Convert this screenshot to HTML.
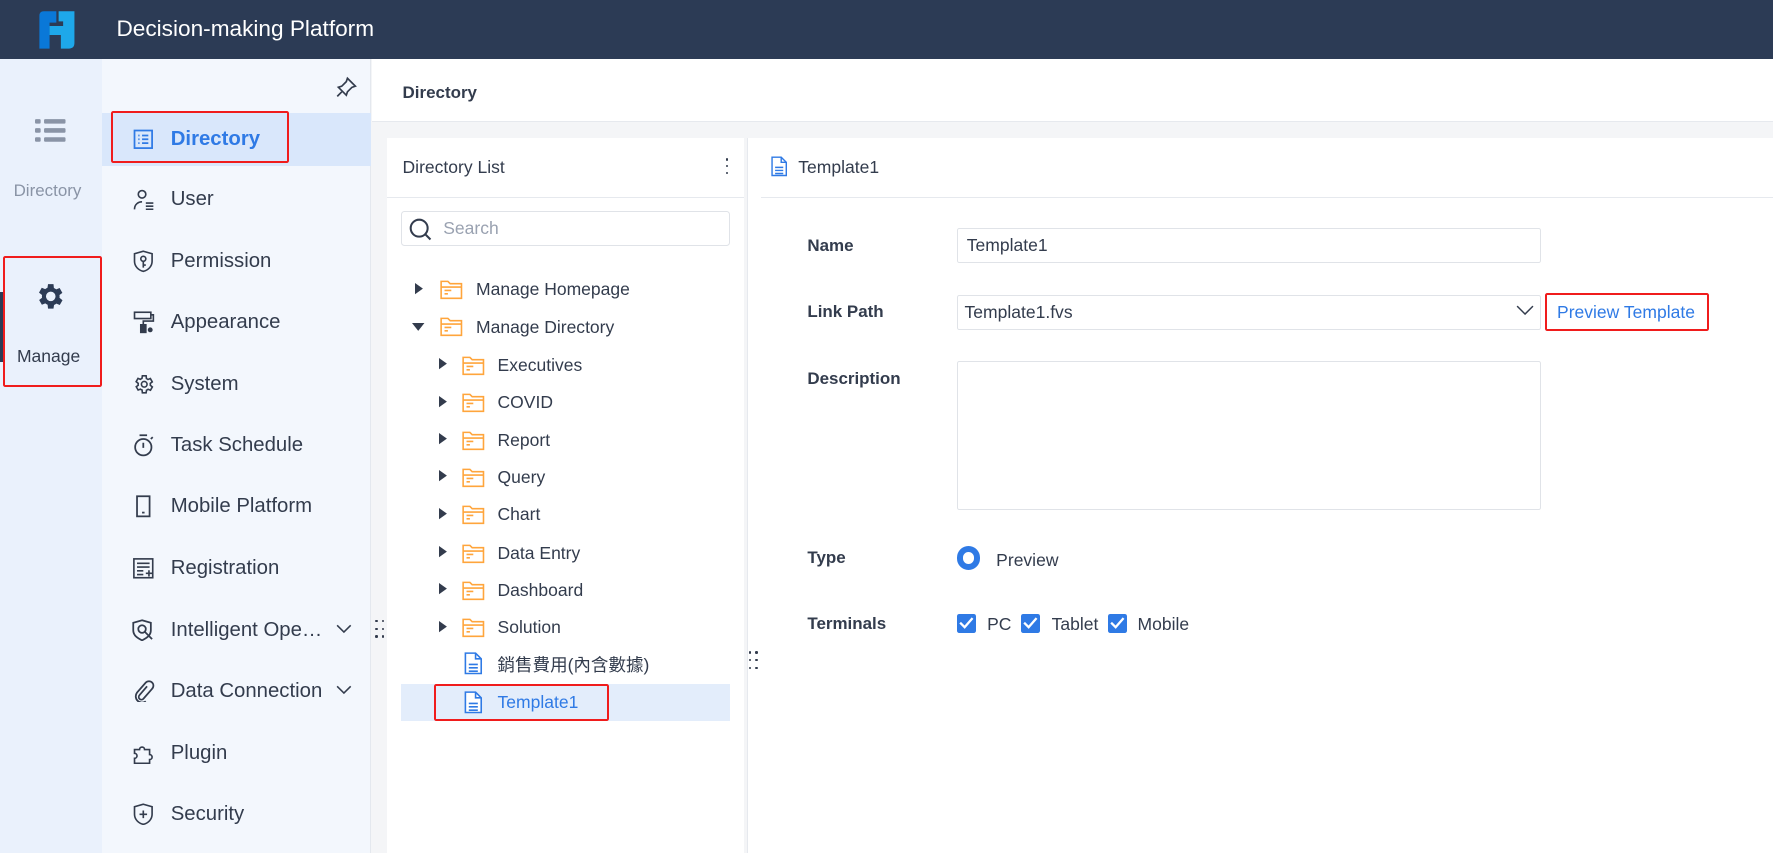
<!DOCTYPE html>
<html><head><meta charset="utf-8">
<style>
*{box-sizing:border-box;margin:0;padding:0}
html,body{width:1568px;height:754px;overflow:hidden}
body{zoom:1.13074;font-family:"Liberation Sans","Noto Sans CJK TC",sans-serif;color:#333c4d;background:#f4f5f7;position:relative}
.a{position:absolute}
.hdr{left:0;top:0;width:1568px;height:52px;background:#2c3b55}
.rail{left:0;top:52px;width:90px;height:702px;background:#eaf1fc}
.side{left:90px;top:52px;width:238px;height:702px;background:#f3f7fd;border-right:1px solid #e4e8ee}
.item{position:absolute;left:151px;font-size:18px;line-height:20px;color:#333c4d}
.ic{position:absolute;left:117px;width:20px;height:20px}
.red{position:absolute;border:2px solid #f01c1c;border-radius:2px}
.t{position:absolute;font-size:15.5px;line-height:18px;color:#333c4d}
.lbl{position:absolute;left:714px;font-size:15px;font-weight:bold;color:#333c4d}
.inp{position:absolute;left:846px;width:517px;border:1px solid #e0e3e8;background:#fff;border-radius:2px}
.cb{position:absolute;width:17px;height:17px;background:#2f7ae5;border-radius:2px}
.dots{position:absolute;width:8px;height:20px}
.dots i{position:absolute;width:2px;height:2px;background:#333c4d;border-radius:1px}
</style></head><body>
<div class="a hdr"></div>
<svg class="a" style="left:32px;top:8px" width="37" height="37" viewBox="0 0 37 37"><path d="M3 6 Q3 2 7 2 H18 V12 H12 V35 H3 Z" fill="#0a78d8"/><path d="M20 2 H34 V30 Q34 35 29 35 H22 V23 H12 V15 H24 V11 H20 Z" fill="#1ea8ea"/></svg>
<div class="a" style="left:103px;top:14px;font-size:20px;color:#fff">Decision-making Platform</div>

<div class="a rail"></div>
<div class="a" style="left:0;top:258px;width:3px;height:62px;background:#2c3b55"></div>
<svg class="a" style="left:31px;top:104px" width="27" height="23" viewBox="0 0 27 23"><g fill="#8a94a6"><rect x="0" y="1" width="5" height="4" rx="1"/><rect x="8" y="1" width="19" height="4" rx="1"/><rect x="0" y="9" width="5" height="4" rx="1"/><rect x="8" y="9" width="19" height="4" rx="1"/><rect x="0" y="17" width="5" height="4" rx="1"/><rect x="8" y="17" width="19" height="4" rx="1"/></g></svg>
<div class="a" style="left:12px;top:160px;font-size:15px;color:#8a94a6">Directory</div>
<svg class="a" style="left:29px;top:248px" width="29" height="29" viewBox="0 0 24 24"><path fill="#2c3b55" d="M19.4 13a7.5 7.5 0 0 0 0-2l2.1-1.6-2-3.5-2.5 1a7 7 0 0 0-1.7-1L15 3h-4l-.4 2.7a7 7 0 0 0-1.7 1l-2.5-1-2 3.5L6.6 11a7.5 7.5 0 0 0 0 2l-2.1 1.6 2 3.5 2.5-1a7 7 0 0 0 1.7 1L11 21h4l.4-2.7a7 7 0 0 0 1.7-1l2.5 1 2-3.5zM13 15.5a3.5 3.5 0 1 1 0-7 3.5 3.5 0 0 1 0 7z"/></svg>
<div class="a" style="left:15px;top:306px;font-size:15.5px;color:#333c4d">Manage</div>
<div class="red" style="left:3px;top:226px;width:87px;height:116px"></div>

<div class="a side"></div>
<svg class="a" style="left:296px;top:67px" width="20" height="20" viewBox="0 0 20 20" fill="none" stroke="#333c4d" stroke-width="1.5"><path d="M11 2l7 7-3 1-4 4-1 3-7-7 3-1 4-4z"/><path d="M2 18l4-4"/></svg>
<div class="a" style="left:90px;top:100px;width:238px;height:47px;background:#d9e7fb"></div>
<svg class="ic" style="top:113px" viewBox="0 0 18 18" fill="none" stroke="#2f7ae5" stroke-width="1.4"><rect x="2" y="2" width="14" height="14"/><path d="M5 6h1M8 6h5M5 9h1M8 9h5M5 12h1M8 12h5"/></svg>
<div class="item" style="top:113px;color:#2f7ae5;font-weight:bold">Directory</div>
<div class="red" style="left:98px;top:98px;width:158px;height:46px"></div>

<svg class="ic" style="top:166px" viewBox="0 0 18 18" fill="none" stroke="#333c4d" stroke-width="1.3"><circle cx="8" cy="5" r="3"/><path d="M2 17c0-4 3-6 6-6M11 12h6M11 14.5h6M11 17h6"/></svg>
<div class="item" style="top:166px">User</div>
<svg class="ic" style="top:221px" viewBox="0 0 18 18" fill="none" stroke="#333c4d" stroke-width="1.3"><path d="M9 1l7 2v6c0 4-3 7-7 8-4-1-7-4-7-8V3z"/><circle cx="9" cy="7" r="2"/><path d="M9 9v5M9 12h2"/></svg>
<div class="item" style="top:221px">Permission</div>
<svg class="ic" style="top:275px" viewBox="0 0 18 18" fill="none" stroke="#333c4d" stroke-width="1.3"><rect x="2" y="1" width="13" height="5"/><path d="M15 3h2v5H9v3"/><rect x="7" y="11" width="4" height="6" fill="#333c4d"/><circle cx="14.5" cy="15" r="1.3" fill="#333c4d"/></svg>
<div class="item" style="top:275px">Appearance</div>
<svg class="ic" style="top:330px" viewBox="0 0 24 24" fill="none" stroke="#333c4d" stroke-width="1.7"><path d="M19.4 13a7.5 7.5 0 0 0 0-2l2.1-1.6-2-3.5-2.5 1a7 7 0 0 0-1.7-1L15 3h-4l-.4 2.7a7 7 0 0 0-1.7 1l-2.5-1-2 3.5L6.6 11a7.5 7.5 0 0 0 0 2l-2.1 1.6 2 3.5 2.5-1a7 7 0 0 0 1.7 1L11 21h4l.4-2.7a7 7 0 0 0 1.7-1l2.5 1 2-3.5z"/><circle cx="13" cy="12" r="3"/></svg>
<div class="item" style="top:330px">System</div>
<svg class="ic" style="top:384px" viewBox="0 0 18 18" fill="none" stroke="#333c4d" stroke-width="1.4"><circle cx="9" cy="10.5" r="6.5"/><path d="M6 1h6M9 7v4M15 4l1.5-1.5"/></svg>
<div class="item" style="top:384px">Task Schedule</div>
<svg class="ic" style="top:438px" viewBox="0 0 18 18" fill="none" stroke="#333c4d" stroke-width="1.4"><rect x="4" y="1" width="10" height="16"/><path d="M8 14h2"/></svg>
<div class="item" style="top:438px">Mobile Platform</div>
<svg class="ic" style="top:493px" viewBox="0 0 18 18" fill="none" stroke="#333c4d" stroke-width="1.3"><rect x="1.5" y="1.5" width="15" height="15"/><path d="M4 5h10M4 8h10M4 11h5M4 14h5M11 13h5M13.5 10.5v5"/></svg>
<div class="item" style="top:493px">Registration</div>
<svg class="ic" style="top:547px" viewBox="0 0 18 18" fill="none" stroke="#333c4d" stroke-width="1.4"><path d="M8 1l7 2v6c0 4-3 6-7 8-4-2-7-4-7-8V3z"/><circle cx="8" cy="8" r="3"/><path d="M10 10l6 6"/></svg>
<div class="item" style="top:547px">Intelligent Ope…</div>
<svg class="a" style="left:297px;top:551px" width="14" height="10" viewBox="0 0 14 10" fill="none" stroke="#333c4d" stroke-width="1.4"><path d="M1 2l6 6 6-6"/></svg>
<svg class="ic" style="top:601px" viewBox="0 0 18 18" fill="none" stroke="#333c4d" stroke-width="1.4"><path d="M12 5l-6 7a2 2 0 0 0 3 3l7-8a3.5 3.5 0 0 0-5-5L4 10a5 5 0 0 0 7 7"/></svg>
<div class="item" style="top:601px">Data Connection</div>
<svg class="a" style="left:297px;top:605px" width="14" height="10" viewBox="0 0 14 10" fill="none" stroke="#333c4d" stroke-width="1.4"><path d="M1 2l6 6 6-6"/></svg>
<svg class="ic" style="top:656px" viewBox="0 0 18 18" fill="none" stroke="#333c4d" stroke-width="1.3"><path d="M2 6h4a2 2 0 1 1 4 0h4v4a2 2 0 1 1 0 4v3H2v-4a2 2 0 1 0 0-4z"/></svg>
<div class="item" style="top:656px">Plugin</div>
<svg class="ic" style="top:710px" viewBox="0 0 18 18" fill="none" stroke="#333c4d" stroke-width="1.3"><path d="M9 1l7 2v6c0 4-3 7-7 8-4-1-7-4-7-8V3z"/><path d="M9 6v6M6 9h6"/></svg>
<div class="item" style="top:710px">Security</div>

<div class="a" style="left:329px;top:52px;width:1239px;height:56px;background:#fff;border-bottom:1px solid #e6e9ee"></div>
<div class="a" style="left:356px;top:73px;font-size:15px;font-weight:bold">Directory</div>

<div class="a" style="left:342px;top:122px;width:316px;height:632px;background:#fff"></div>
<div class="a" style="left:342px;top:174px;width:316px;height:1px;background:#e6e9ee"></div>
<div class="t" style="left:356px;top:139px">Directory List</div>
<div class="dots" style="left:642px;top:140px"><i style="left:0;top:0"></i><i style="left:0;top:6px"></i><i style="left:0;top:12px"></i></div>
<div class="a" style="left:355px;top:187px;width:291px;height:31px;border:1px solid #e0e3e8;border-radius:3px"></div>
<svg class="a" style="left:362px;top:193px" width="21" height="21" viewBox="0 0 21 21" fill="none" stroke="#333c4d" stroke-width="1.8"><circle cx="9" cy="9" r="7.5"/><path d="M14.5 14.5l4.5 4.5"/></svg>
<div class="t" style="left:392px;top:193px;color:#9aa2b1">Search</div>

<div class="a" style="left:355px;top:605px;width:291px;height:33px;background:#e3edfb"></div>
<svg width="0" height="0" style="position:absolute"><defs>
<g id="fold"><path d="M1 3h6l2 2h10v13H1z" fill="#fff" stroke="#ffa53c" stroke-width="1.4"/><path d="M1 8h18" stroke="#ffa53c" stroke-width="1.4"/><path d="M4 11h6M4 14h3" stroke="#ffa53c" stroke-width="1.4"/></g>
<g id="doc"><path d="M3 1h9l5 5v13H3z" fill="#fff" stroke="#2f7ae5" stroke-width="1.4"/><path d="M12 1v5h5M6 11h8M6 14h8M6 17h8" stroke="#2f7ae5" stroke-width="1.4" fill="none"/></g>
<path id="tri" d="M0 0l7 5-7 5z" fill="#333c4d"/>
</defs></svg>
<svg class="a" style="left:367px;top:250px" width="8" height="11"><use href="#tri"/></svg>
<svg class="a" style="left:389px;top:246px" width="21" height="20"><use href="#fold"/></svg>
<div class="t" style="left:421px;top:247px">Manage Homepage</div>
<svg class="a" style="left:364px;top:286px" width="12" height="8"><path d="M0 0h11l-5.5 7z" fill="#333c4d"/></svg>
<svg class="a" style="left:389px;top:279px" width="21" height="20"><use href="#fold"/></svg>
<div class="t" style="left:421px;top:280px">Manage Directory</div>

<svg class="a" style="left:388px;top:317px" width="8" height="11"><use href="#tri"/></svg><svg class="a" style="left:409px;top:313px" width="21" height="20"><use href="#fold"/></svg><div class="t" style="left:440px;top:314px">Executives</div>
<svg class="a" style="left:388px;top:350px" width="8" height="11"><use href="#tri"/></svg><svg class="a" style="left:409px;top:346px" width="21" height="20"><use href="#fold"/></svg><div class="t" style="left:440px;top:347px">COVID</div>
<svg class="a" style="left:388px;top:383px" width="8" height="11"><use href="#tri"/></svg><svg class="a" style="left:409px;top:379px" width="21" height="20"><use href="#fold"/></svg><div class="t" style="left:440px;top:380px">Report</div>
<svg class="a" style="left:388px;top:416px" width="8" height="11"><use href="#tri"/></svg><svg class="a" style="left:409px;top:412px" width="21" height="20"><use href="#fold"/></svg><div class="t" style="left:440px;top:413px">Query</div>
<svg class="a" style="left:388px;top:449px" width="8" height="11"><use href="#tri"/></svg><svg class="a" style="left:409px;top:445px" width="21" height="20"><use href="#fold"/></svg><div class="t" style="left:440px;top:446px">Chart</div>
<svg class="a" style="left:388px;top:483px" width="8" height="11"><use href="#tri"/></svg><svg class="a" style="left:409px;top:479px" width="21" height="20"><use href="#fold"/></svg><div class="t" style="left:440px;top:480px">Data Entry</div>
<svg class="a" style="left:388px;top:516px" width="8" height="11"><use href="#tri"/></svg><svg class="a" style="left:409px;top:512px" width="21" height="20"><use href="#fold"/></svg><div class="t" style="left:440px;top:513px">Dashboard</div>
<svg class="a" style="left:388px;top:549px" width="8" height="11"><use href="#tri"/></svg><svg class="a" style="left:409px;top:545px" width="21" height="20"><use href="#fold"/></svg><div class="t" style="left:440px;top:546px">Solution</div>
<svg class="a" style="left:409px;top:577px" width="20" height="21"><use href="#doc"/></svg><div class="t" style="left:440px;top:579px">銷售費用(內含數據)</div>
<svg class="a" style="left:409px;top:611px" width="20" height="21"><use href="#doc"/></svg><div class="t" style="left:440px;top:612px;color:#2f7ae5">Template1</div>
<div class="red" style="left:384px;top:605px;width:155px;height:33px"></div>

<div class="dots" style="left:332px;top:548px"><i style="left:0;top:0"></i><i style="left:0;top:7px"></i><i style="left:0;top:14px"></i><i style="left:6px;top:0"></i><i style="left:6px;top:7px"></i><i style="left:6px;top:14px"></i></div>
<div class="dots" style="left:662px;top:576px"><i style="left:0;top:0"></i><i style="left:0;top:7px"></i><i style="left:0;top:14px"></i><i style="left:6px;top:0"></i><i style="left:6px;top:7px"></i><i style="left:6px;top:14px"></i></div>

<div class="a" style="left:661px;top:122px;width:907px;height:632px;background:#fff;border-left:1px solid #e6e9ee"></div>
<div class="dots" style="left:662px;top:576px"><i style="left:0;top:0"></i><i style="left:0;top:7px"></i><i style="left:0;top:14px"></i><i style="left:6px;top:0"></i><i style="left:6px;top:7px"></i><i style="left:6px;top:14px"></i></div>
<div class="a" style="left:673px;top:174px;width:895px;height:1px;background:#e6e9ee"></div>
<svg class="a" style="left:680px;top:137px" width="18" height="21" viewBox="0 0 20 21"><use href="#doc"/></svg>
<div class="t" style="left:706px;top:139px">Template1</div>

<div class="lbl" style="left:714px;top:209px">Name</div>
<div class="inp" style="top:202px;height:31px"></div>
<div class="t" style="left:855px;top:208px">Template1</div>
<div class="lbl" style="top:267px">Link Path</div>
<div class="inp" style="top:261px;height:31px"></div>
<div class="t" style="left:853px;top:267px">Template1.fvs</div>
<svg class="a" style="left:1341px;top:270px" width="16" height="10" fill="none" stroke="#333c4d" stroke-width="1.3"><path d="M1 1l7 7 7-7"/></svg>
<div class="t" style="left:1377px;top:267px;color:#2f7ae5">Preview Template</div>
<div class="red" style="left:1366px;top:259px;width:145px;height:34px"></div>
<div class="lbl" style="top:326px">Description</div>
<div class="inp" style="top:319px;height:132px"></div>
<div class="lbl" style="top:485px">Type</div>
<div class="a" style="left:846px;top:483px;width:21px;height:21px;border-radius:50%;border:6px solid #2f7ae5;background:#fff"></div>
<div class="t" style="left:881px;top:486px">Preview</div>
<div class="lbl" style="top:543px">Terminals</div>
<div class="cb" style="left:846px;top:543px"></div><svg class="a" style="left:848px;top:546px" width="13" height="11" fill="none" stroke="#fff" stroke-width="2"><path d="M1 5l4 4 7-8"/></svg>
<div class="t" style="left:873px;top:543px">PC</div>
<div class="cb" style="left:903px;top:543px"></div><svg class="a" style="left:905px;top:546px" width="13" height="11" fill="none" stroke="#fff" stroke-width="2"><path d="M1 5l4 4 7-8"/></svg>
<div class="t" style="left:930px;top:543px">Tablet</div>
<div class="cb" style="left:980px;top:543px"></div><svg class="a" style="left:982px;top:546px" width="13" height="11" fill="none" stroke="#fff" stroke-width="2"><path d="M1 5l4 4 7-8"/></svg>
<div class="t" style="left:1006px;top:543px">Mobile</div>
</body></html>
